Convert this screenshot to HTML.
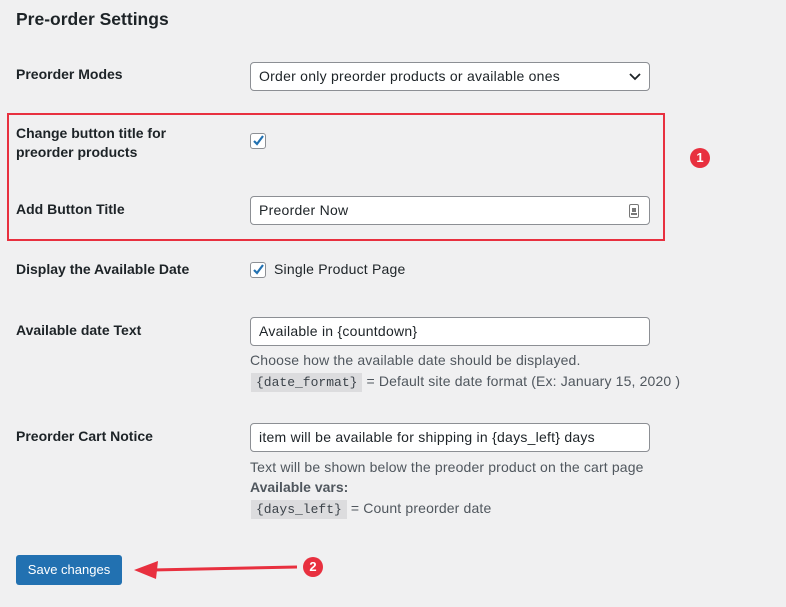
<!DOCTYPE html>
<html><head><style>
body{margin:0;width:786px;height:607px;background:#f0f0f1;font-family:"Liberation Sans",sans-serif;color:#1d2327;position:relative;overflow:hidden}
.a{position:absolute;white-space:nowrap}
.l{font-size:14px;font-weight:bold;line-height:19px}
.in{position:absolute;left:250px;height:27px;background:#fff;border:1px solid #8c8f94;border-radius:4px;font-size:14px;line-height:27px;padding-left:8px;box-sizing:content-box;width:390px;letter-spacing:0.25px}
.d{font-size:14px;color:#50575e}
.code{background:#dcdcde;font-family:"Liberation Mono",monospace;font-size:13px;padding:2px 5px;color:#3c434a}
.cb{position:absolute;left:250px;width:14px;height:14px;border:1px solid #8c8f94;border-radius:3px;background:#fff}
</style></head><body>
<div class="a" style="left:16px;top:9px;font-size:17.5px;font-weight:bold">Pre-order Settings</div>
<div class="a l" style="left:16px;top:65px">Preorder Modes</div>
<div class="in" style="top:62px">Order only preorder products or available ones
<svg style="position:absolute;right:8px;top:9px" width="12" height="10"><path d="M1 2l5 5 5-5" stroke="#1d2327" stroke-width="1.8" fill="none"/></svg></div>
<div class="a l" style="left:16px;top:124px">Change button title for<br>preorder products</div>
<div class="cb" style="top:133px"><svg width="14" height="14"><path d="M3 7l3 3 6-8" stroke="#2271b1" stroke-width="2.2" fill="none"/></svg></div>
<div class="a l" style="left:16px;top:200px">Add Button Title</div>
<div class="in" style="top:196px">Preorder Now
<svg style="position:absolute;right:10px;top:7px" width="10" height="14"><rect x="0.5" y="0.5" width="9" height="13" rx="1.5" fill="none" stroke="#777"/><rect x="3" y="4" width="4" height="4" fill="#777"/><rect x="2" y="9" width="6" height="2" fill="#777"/></svg></div>
<div class="a" style="left:7px;top:113px;width:654px;height:124px;border:2px solid #e8303f"></div>
<div class="a" style="left:690px;top:148px;width:20px;height:20px;border-radius:50%;background:#e8303f;color:#fff;font-size:13px;font-weight:bold;text-align:center;line-height:20px">1</div>
<div class="a l" style="left:16px;top:260px">Display the Available Date</div>
<div class="cb" style="top:262px"><svg width="14" height="14"><path d="M3 7l3 3 6-8" stroke="#2271b1" stroke-width="2.2" fill="none"/></svg></div>
<div class="a" style="left:274px;top:261px;font-size:14px;letter-spacing:0.2px">Single Product Page</div>
<div class="a l" style="left:16px;top:321px">Available date Text</div>
<div class="in" style="top:317px">Available in {countdown}</div>
<div class="a d" style="left:250px;top:352px;letter-spacing:0.15px">Choose how the available date should be displayed.</div>
<div class="a d" style="left:251px;top:373px;letter-spacing:0.15px"><span class="code" style="letter-spacing:0">{date_format}</span> = Default site date format (Ex: January 15, 2020 )</div>
<div class="a l" style="left:16px;top:427px">Preorder Cart Notice</div>
<div class="in" style="top:423px">item will be available for shipping in {days_left} days</div>
<div class="a d" style="left:250px;top:459px;letter-spacing:0.15px">Text will be shown below the preoder product on the cart page</div>
<div class="a d" style="left:250px;top:479px;font-weight:bold">Available vars:</div>
<div class="a d" style="left:251px;top:500px;letter-spacing:0.15px"><span class="code" style="letter-spacing:0">{days_left}</span> = Count preorder date</div>
<div class="a" style="left:16px;top:555px;width:106px;height:30px;background:#2271b1;border-radius:3px;color:#fff;font-size:13px;text-align:center;line-height:30px">Save changes</div>
<svg class="a" style="left:130px;top:555px" width="180" height="30"><path d="M167 12L22 15" stroke="#e8303f" stroke-width="3"/><path d="M4 15L28 6L26 24Z" fill="#e8303f"/></svg>
<div class="a" style="left:303px;top:557px;width:20px;height:20px;border-radius:50%;background:#e8303f;color:#fff;font-size:13px;font-weight:bold;text-align:center;line-height:20px">2</div>
</body></html>
